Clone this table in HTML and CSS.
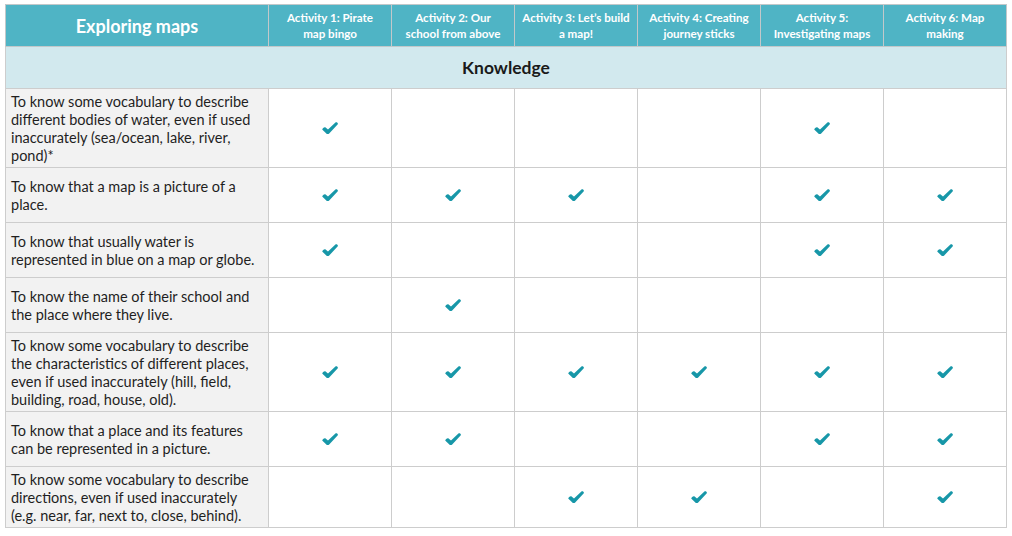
FILE: index.html
```html
<!DOCTYPE html>
<html>
<head>
<meta charset="utf-8">
<link rel="stylesheet" href="styles.css">
</head>
<body>
<svg class="defs" width="0" height="0" aria-hidden="true">
  <defs>
    <path id="chk" d="M0.2 7.4 C0.6 6 2.4 4.6 3.6 5.4 L6 7.6 L13.4 0.4 C14.6 -0.4 16.4 0.9 15.8 2.2 L7.2 11.6 C6.4 12.3 5.2 12.3 4.6 11.7 Z"/>
  </defs>
</svg>
<table class="grid">
  <colgroup>
    <col class="c-first">
    <col class="c-act"><col class="c-act"><col class="c-act"><col class="c-act"><col class="c-act"><col class="c-act">
  </colgroup>
  <thead>
    <tr class="head">
      <th class="title">Exploring maps</th>
      <th>Activity 1: Pirate<br>map bingo</th>
      <th>Activity 2: Our<br>school from above</th>
      <th>Activity 3: Let’s build<br>a map!</th>
      <th>Activity 4: Creating<br>journey sticks</th>
      <th>Activity 5:<br>Investigating maps</th>
      <th>Activity 6: Map<br>making</th>
    </tr>
    <tr class="section">
      <th colspan="7">Knowledge</th>
    </tr>
  </thead>
  <tbody>
    <tr>
      <td class="desc">To know some vocabulary to describe different bodies of water, even if used inaccurately (sea/ocean, lake, river, pond)*</td>
      <td class="tick"><svg viewBox="0 0 16 12"><use href="#chk"/></svg></td><td></td><td></td><td></td><td class="tick"><svg viewBox="0 0 16 12"><use href="#chk"/></svg></td><td></td>
    </tr>
    <tr>
      <td class="desc">To know that a map is a picture of a place.</td>
      <td class="tick"><svg viewBox="0 0 16 12"><use href="#chk"/></svg></td><td class="tick"><svg viewBox="0 0 16 12"><use href="#chk"/></svg></td><td class="tick"><svg viewBox="0 0 16 12"><use href="#chk"/></svg></td><td></td><td class="tick"><svg viewBox="0 0 16 12"><use href="#chk"/></svg></td><td class="tick"><svg viewBox="0 0 16 12"><use href="#chk"/></svg></td>
    </tr>
    <tr>
      <td class="desc">To know that usually water is represented in blue on a map or globe.</td>
      <td class="tick"><svg viewBox="0 0 16 12"><use href="#chk"/></svg></td><td></td><td></td><td></td><td class="tick"><svg viewBox="0 0 16 12"><use href="#chk"/></svg></td><td class="tick"><svg viewBox="0 0 16 12"><use href="#chk"/></svg></td>
    </tr>
    <tr>
      <td class="desc">To know the name of their school and the place where they live.</td>
      <td></td><td class="tick"><svg viewBox="0 0 16 12"><use href="#chk"/></svg></td><td></td><td></td><td></td><td></td>
    </tr>
    <tr>
      <td class="desc">To know some vocabulary to describe the characteristics of different places, even if used inaccurately (hill, field, building, road, house, old).</td>
      <td class="tick"><svg viewBox="0 0 16 12"><use href="#chk"/></svg></td><td class="tick"><svg viewBox="0 0 16 12"><use href="#chk"/></svg></td><td class="tick"><svg viewBox="0 0 16 12"><use href="#chk"/></svg></td><td class="tick"><svg viewBox="0 0 16 12"><use href="#chk"/></svg></td><td class="tick"><svg viewBox="0 0 16 12"><use href="#chk"/></svg></td><td class="tick"><svg viewBox="0 0 16 12"><use href="#chk"/></svg></td>
    </tr>
    <tr>
      <td class="desc">To know that a place and its features can be represented in a picture.</td>
      <td class="tick"><svg viewBox="0 0 16 12"><use href="#chk"/></svg></td><td class="tick"><svg viewBox="0 0 16 12"><use href="#chk"/></svg></td><td></td><td></td><td class="tick"><svg viewBox="0 0 16 12"><use href="#chk"/></svg></td><td class="tick"><svg viewBox="0 0 16 12"><use href="#chk"/></svg></td>
    </tr>
    <tr>
      <td class="desc">To know some vocabulary to describe directions, even if used inaccurately (e.g. near, far, next to, close, behind).</td>
      <td></td><td></td><td class="tick"><svg viewBox="0 0 16 12"><use href="#chk"/></svg></td><td class="tick"><svg viewBox="0 0 16 12"><use href="#chk"/></svg></td><td></td><td class="tick"><svg viewBox="0 0 16 12"><use href="#chk"/></svg></td>
    </tr>
  </tbody>
</table>
</body>
</html>
```

FILE: styles.css
```css
html, body {
  margin: 0;
  padding: 0;
  background: #ffffff;
}
body {
  padding: 4px 5px;
  font-family: Lato, "Liberation Sans", sans-serif;
  color: #1f1f1f;
}
.defs {
  position: absolute;
  width: 0;
  height: 0;
  overflow: hidden;
}
.grid {
  border-collapse: collapse;
  table-layout: fixed;
  width: 1002px;
}
.c-first { width: 263px; }
.c-act { width: 123px; }
.grid th, .grid td {
  border: 1px solid #cdcdcd;
  padding: 0;
}
.head th {
  background: #4fb4c5;
  color: #ffffff;
  height: 41px;
  font-size: 11.6px;
  line-height: 16px;
  font-weight: 700;
  text-align: center;
  vertical-align: middle;
  padding: 0 2px;
  border-color: #c2c8ca;
  white-space: nowrap;
}
.head th.title {
  font-size: 18px;
  font-weight: 700;
}
.section th {
  background: #d2e9ee;
  height: 41px;
  font-size: 17.5px;
  font-weight: 700;
  color: #1a1a1a;
  text-align: center;
  vertical-align: middle;
}
tbody tr {
  height: 55px;
}
tbody td {
  background: #ffffff;
  vertical-align: middle;
}
td.desc {
  background: #f2f2f2;
  font-size: 14.5px;
  line-height: 18px;
  padding: 4px 6px 2px 5px;
  color: #1f1f1f;
}
td.tick {
  text-align: center;
  line-height: 0;
}
td.tick svg {
  width: 16px;
  height: 12px;
  fill: #1797a8;
  display: inline-block;
}
```
